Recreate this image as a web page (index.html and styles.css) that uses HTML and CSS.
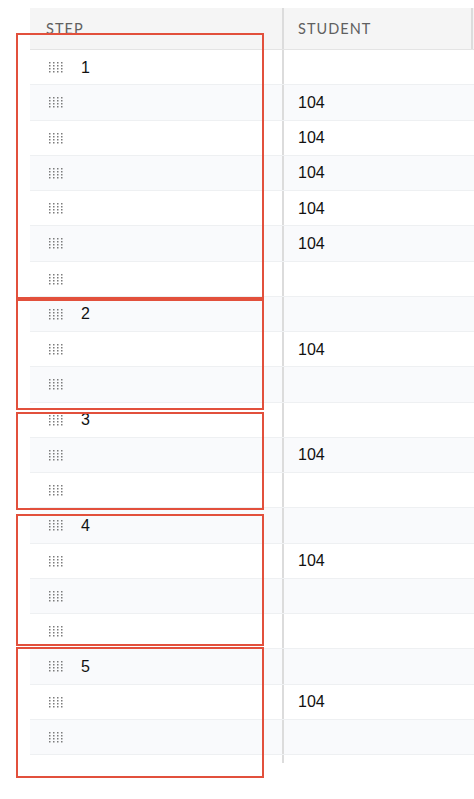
FILE: index.html
```html
<!DOCTYPE html>
<html>
<head>
<meta charset="utf-8">
<link rel="stylesheet" href="styles.css">
</head>
<body>
<div class="page">
  <div class="table">
    <div class="thead">
      <div class="th th-step">Step</div>
      <div class="th th-student">Student</div>
      <div class="th th-more"></div>
    </div>
    <div class="tbody" id="tbody"></div>
    <div class="tfoot"><div class="c1"></div><div class="c2"></div></div>
  </div>
  <div class="box box1"></div>
  <div class="box box2"></div>
  <div class="box box3"></div>
  <div class="box box4"></div>
  <div class="box box5"></div>
</div>
<script src="app.js"></script>
</body>
</html>
```

FILE: app.js
```js
var rows = [
  ["1",""],["","104"],["","104"],["","104"],["","104"],["","104"],["",""],
  ["2",""],["","104"],["",""],
  ["3",""],["","104"],["",""],
  ["4",""],["","104"],["",""],["",""],
  ["5",""],["","104"],["",""]
];
var dots = '';
for (var r = 0; r < 4; r++) {
  for (var c = 0; c < 4; c++) {
    dots += '<rect x="' + (c * 4) + '" y="' + (r * 3) + '" width="1.5" height="1.5"/>';
  }
}
var icon = '<svg class="handle" width="14" height="11" viewBox="0 0 14 11">' + dots + '</svg>';
var html = '';
rows.forEach(function (row, i) {
  html += '<div class="tr' + (i % 2 ? ' alt' : '') + '">' +
    '<div class="td td-step">' + icon + '<span class="num">' + row[0] + '</span></div>' +
    '<div class="td td-student">' + row[1] + '</div></div>';
});
document.getElementById('tbody').innerHTML = html;
```

FILE: styles.css
```css
html, body {
  margin: 0;
  padding: 0;
  background: #ffffff;
  overflow: hidden;
}
.page {
  position: relative;
  width: 474px;
  height: 799px;
  overflow: hidden;
  padding: 8px 0 0 30px;
  box-sizing: border-box;
  font-family: "Liberation Sans", Arial, sans-serif;
}
.table {
  width: 520px;
}
.thead {
  display: grid;
  grid-template-columns: 252px 189px 1fr;
  height: 41px;
  background: #f5f5f5;
  border-bottom: 1px solid #e4e4e4;
}
.th {
  display: flex;
  align-items: center;
  padding-left: 16px;
  font-family: Lato, "Open Sans", sans-serif;
  font-size: 14.5px;
  letter-spacing: 1.05px;
  text-transform: uppercase;
  color: #606060;
}
.th-student, .th-more {
  border-left: 2px solid #dcdcdc;
}
.th-student { padding-left: 14px; }
.tr {
  display: grid;
  grid-template-columns: 252px 1fr;
  height: 35.25px;
  box-sizing: border-box;
  border-bottom: 1px solid #eef0f2;
  background: #ffffff;
}
.tr.alt {
  background: #f9fafc;
}
.td {
  display: flex;
  align-items: center;
  padding-top: 1px;
  font-size: 16px;
  color: #111;
}
.td-step {
  padding-left: 19px;
}
.td-student {
  border-left: 2px solid #dcdcdc;
  padding-left: 14px;
}
.handle {
  fill: #7c7c7c;
  flex: none;
}
.num {
  margin-left: 18px;
}
.tfoot {
  display: grid;
  grid-template-columns: 252px 1fr;
  height: 8px;
}
.tfoot .c2 {
  border-left: 2px solid #dcdcdc;
}
.box {
  position: absolute;
  left: 16px;
  width: 248px;
  border: 2px solid #e2503c;
  box-sizing: border-box;
}
.box1 { top: 33px; height: 266px; }
.box2 { top: 299px; height: 111px; }
.box3 { top: 412px; height: 98px; }
.box4 { top: 514px; height: 132px; }
.box5 { top: 647px; height: 131px; }
```
